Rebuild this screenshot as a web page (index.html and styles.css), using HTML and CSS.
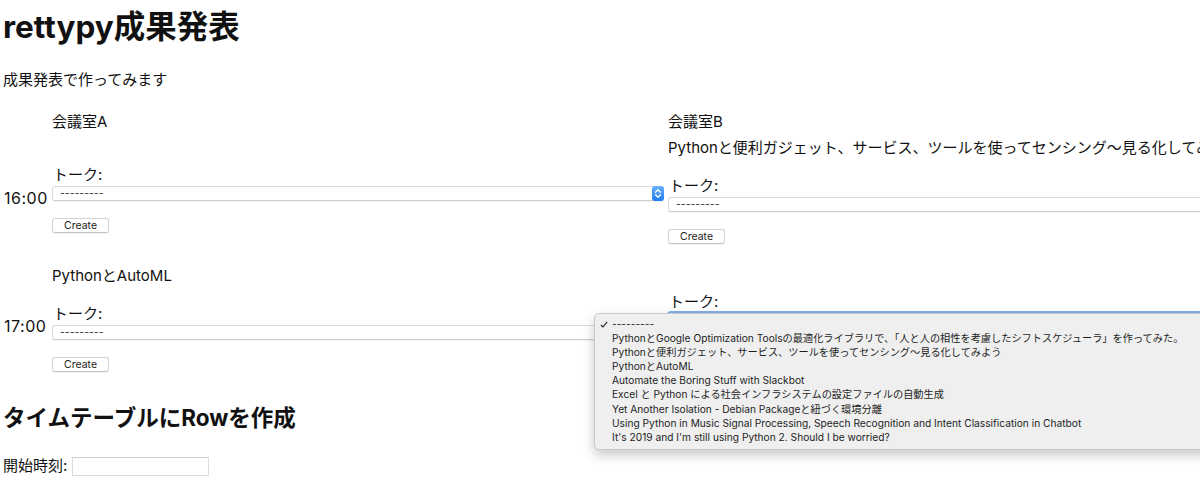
FILE: index.html
```html
<!DOCTYPE html>
<html lang="ja">
<head>
<meta charset="utf-8">
<title>rettypy成果発表</title>
<link rel="stylesheet" href="styles.css">
</head>
<body>
<h1 class="title">rettypy成果発表</h1>
<p class="intro">成果発表で作ってみます</p>

<div class="timetable">
  <div class="cell"></div>
  <div class="cell room">会議室A</div>
  <div class="cell room">会議室B</div>

  <div class="cell time time-r2">16:00</div>
  <div class="cell slot slot-a2">
    <div class="label">トーク:</div>
    <div class="select"><span class="select-value">---------</span><span class="stepper"><svg width="12" height="15" viewBox="0 0 12 15"><path d="M3.6 6.2 L6 3.8 L8.4 6.2 M3.6 8.8 L6 11.2 L8.4 8.8" fill="none" stroke="#fff" stroke-width="1.3" stroke-linecap="round" stroke-linejoin="round"/></svg></span></div>
    <div class="btn">Create</div>
  </div>
  <div class="cell slot slot-b2">
    <p class="talk">Pythonと便利ガジェット、サービス、ツールを使ってセンシング〜見る化してみよう</p>
    <div class="label">トーク:</div>
    <div class="select"><span class="select-value">---------</span><span class="stepper"><svg width="12" height="15" viewBox="0 0 12 15"><path d="M3.6 6.2 L6 3.8 L8.4 6.2 M3.6 8.8 L6 11.2 L8.4 8.8" fill="none" stroke="#fff" stroke-width="1.3" stroke-linecap="round" stroke-linejoin="round"/></svg></span></div>
    <div class="btn">Create</div>
  </div>

  <div class="cell time time-r3">17:00</div>
  <div class="cell slot slot-a3">
    <p class="talk">PythonとAutoML</p>
    <div class="label">トーク:</div>
    <div class="select"><span class="select-value">---------</span><span class="stepper"><svg width="12" height="15" viewBox="0 0 12 15"><path d="M3.6 6.2 L6 3.8 L8.4 6.2 M3.6 8.8 L6 11.2 L8.4 8.8" fill="none" stroke="#fff" stroke-width="1.3" stroke-linecap="round" stroke-linejoin="round"/></svg></span></div>
    <div class="btn">Create</div>
  </div>
  <div class="cell slot slot-b3">
    <div class="label">トーク:</div>
    <div class="select select-open"><span class="select-value">---------</span>
      <ul class="popup">
        <li class="option option-checked"><svg class="check" width="8" height="7" viewBox="0 0 8 7"><path d="M0.8 3.8 L2.9 5.9 L7.2 0.9" fill="none" stroke="#222" stroke-width="1.1"/></svg>---------</li>
        <li class="option">PythonとGoogle Optimization Toolsの最適化ライブラリで、「人と人の相性を考慮したシフトスケジューラ」を作ってみた。</li>
        <li class="option">Pythonと便利ガジェット、サービス、ツールを使ってセンシング〜見る化してみよう</li>
        <li class="option">PythonとAutoML</li>
        <li class="option">Automate the Boring Stuff with Slackbot</li>
        <li class="option">Excel と Python による社会インフラシステムの設定ファイルの自動生成</li>
        <li class="option">Yet Another Isolation - Debian Packageと紐づく環境分離</li>
        <li class="option">Using Python in Music Signal Processing, Speech Recognition and Intent Classification in Chatbot</li>
        <li class="option">It's 2019 and I'm still using Python 2. Should I be worried?</li>
      </ul>
    </div>
    <div class="btn">Create</div>
  </div>
</div>

<h2 class="subtitle">タイムテーブルにRowを作成</h2>
<div class="field">
  <span class="field-label">開始時刻:</span>
  <span class="input"></span>
</div>
</body>
</html>
```

FILE: styles.css
```css
html {
  overflow: hidden;
}

body {
  margin: 0;
  padding: 0 0 0 3px;
  font-family: Inter, "Noto Sans CJK JP", sans-serif;
  font-size: 15px;
  line-height: 18px;
  color: #111;
  background: #fff;
}

.title {
  margin: 9px 0 0;
  font-size: 31.5px;
  line-height: 36px;
  font-weight: 700;
}

.intro {
  margin: 26px 0 0;
}

.timetable {
  display: grid;
  grid-template-columns: 49px 616px 612px;
  align-items: start;
  margin-top: 24px;
  width: max-content;
}

.cell {
  min-width: 0;
}

.room {
  line-height: 18px;
}

.time {
  padding-left: 1px;
  font-size: 16px;
  letter-spacing: 0.5px;
}

.time-r2 { padding-top: 58px; }
.time-r3 { padding-top: 73px; }
.slot-a2 { padding-top: 35px; }
.slot-b2 { padding-top: 8px; }
.slot-a3 { padding-top: 23px; }
.slot-b3 { padding-top: 49px; }

.talk {
  margin: 0 0 20px;
  white-space: nowrap;
}

.label {
  padding-left: 1px;
}

.select {
  position: relative;
  display: flex;
  align-items: center;
  justify-content: space-between;
  box-sizing: border-box;
  width: 612px;
  height: 15px;
  margin-top: 2px;
  padding-left: 7px;
  background: #fff;
  border: 1px solid #dadada;
  border-bottom-color: #cfcfcf;
  border-radius: 3px;
  box-shadow: 0 1px 1px rgba(0, 0, 0, 0.06);
  font-size: 10.5px;
  line-height: 13px;
  color: #333;
}

.stepper {
  display: block;
  width: 12px;
  height: 15px;
  margin: -1px -1px -1px 0;
  border-radius: 3px;
  background: linear-gradient(#69b1fb, #1c7cf2);
}

.stepper svg {
  display: block;
}

.select-open {
  outline: 2px solid rgba(90, 150, 225, 0.75);
  outline-offset: 0;
}

.popup {
  position: absolute;
  z-index: 10;
  left: -75px;
  top: -1px;
  width: 680px;
  margin: 0;
  padding: 3px 0 5px;
  list-style: none;
  background: #efefef;
  border: 1px solid #c9c9c9;
  border-radius: 5px;
  box-shadow: 0 5px 12px rgba(0, 0, 0, 0.22);
  font-size: 10.2px;
  line-height: 14.1px;
  color: #1d1d1d;
}

.option {
  position: relative;
  padding-left: 17px;
  white-space: nowrap;
}

.check {
  position: absolute;
  left: 5px;
  top: 4px;
}

.btn {
  box-sizing: border-box;
  width: 57px;
  height: 15px;
  margin-top: 17px;
  background: #fff;
  border: 1px solid #d2d2d2;
  border-bottom-color: #c4c4c4;
  border-radius: 3px;
  box-shadow: 0 1px 1px rgba(0, 0, 0, 0.05);
  font-size: 10.5px;
  line-height: 13px;
  text-align: center;
  color: #222;
}

.subtitle {
  margin: 33px 0 0;
  font-size: 22.5px;
  line-height: 26px;
  font-weight: 700;
}

.field {
  display: flex;
  align-items: center;
  gap: 5px;
  height: 20px;
  margin-top: 25px;
}

.input {
  display: block;
  box-sizing: border-box;
  width: 137px;
  height: 19px;
  background: #fff;
  border: 1px solid #dcdcdc;
  border-top-color: #cfcfcf;
}
```
